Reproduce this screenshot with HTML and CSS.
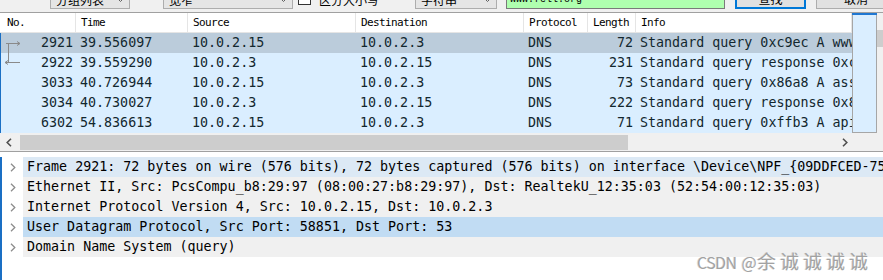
FILE: index.html
```html
<!DOCTYPE html>
<html>
<head>
<meta charset="utf-8">
<link rel="stylesheet" href="styles.css">
</head>
<body>
<div class="topbar">
  <div class="combo c1"><span>分组列表</span><svg class="dd" width="9" height="5" viewBox="0 0 9 5"><path d="M0.5 0.5L4.5 4.5L8.5 0.5" fill="none" stroke="#606060"/></svg></div>
  <div class="combo c2"><span>宽窄</span><svg class="dd" width="9" height="5" viewBox="0 0 9 5"><path d="M0.5 0.5L4.5 4.5L8.5 0.5" fill="none" stroke="#606060"/></svg></div>
  <div class="chk"><span class="box"></span><span class="lbl">区分大小写</span></div>
  <div class="combo c3"><span>字符串</span><svg class="dd" width="9" height="5" viewBox="0 0 9 5"><path d="M0.5 0.5L4.5 4.5L8.5 0.5" fill="none" stroke="#606060"/></svg></div>
  <div class="search">www.fell.org</div>
  <div class="btn primary">查找</div>
  <div class="btn b2">取消</div>
</div>

<div class="list">
  <div class="table">
    <div class="thead">
      <div class="th th-no">No.</div>
      <div class="th">Time</div>
      <div class="th">Source</div>
      <div class="th">Destination</div>
      <div class="th">Protocol</div>
      <div class="th">Length</div>
      <div class="th">Info</div>
    </div>
    <div class="rows">
      <div class="row sel">
        <div class="td no"><svg class="rel" width="24" height="20" viewBox="0 0 24 20"><path d="M6 10.5H20M17 8.5L20 10.5L17 12.5M8.5 10.5V20" fill="none" stroke="#8a8a8a"/></svg><span>2921</span></div>
        <div class="td">39.556097</div>
        <div class="td">10.0.2.15</div>
        <div class="td">10.0.2.3</div>
        <div class="td">DNS</div>
        <div class="td r">72</div>
        <div class="td">Standard query 0xc9ec A www.fell.org</div>
      </div>
      <div class="row">
        <div class="td no"><svg class="rel" width="24" height="20" viewBox="0 0 24 20"><path d="M8.5 0V9.5M5 9.5H20M8 7.5L5 9.5L8 11.5" fill="none" stroke="#8a8a8a"/></svg><span>2922</span></div>
        <div class="td">39.559290</div>
        <div class="td">10.0.2.3</div>
        <div class="td">10.0.2.15</div>
        <div class="td">DNS</div>
        <div class="td r">231</div>
        <div class="td">Standard query response 0xc9ec A www.fell.org CNAME</div>
      </div>
      <div class="row">
        <div class="td no"><span>3033</span></div>
        <div class="td">40.726944</div>
        <div class="td">10.0.2.15</div>
        <div class="td">10.0.2.3</div>
        <div class="td">DNS</div>
        <div class="td r">73</div>
        <div class="td">Standard query 0x86a8 A assets.fell.org</div>
      </div>
      <div class="row">
        <div class="td no"><span>3034</span></div>
        <div class="td">40.730027</div>
        <div class="td">10.0.2.3</div>
        <div class="td">10.0.2.15</div>
        <div class="td">DNS</div>
        <div class="td r">222</div>
        <div class="td">Standard query response 0x86a8 A assets.fell.org</div>
      </div>
      <div class="row">
        <div class="td no"><span>6302</span></div>
        <div class="td">54.836613</div>
        <div class="td">10.0.2.15</div>
        <div class="td">10.0.2.3</div>
        <div class="td">DNS</div>
        <div class="td r">71</div>
        <div class="td">Standard query 0xffb3 A api.fell.org</div>
      </div>
    </div>
  </div>
  <div class="minimap"><div class="mark"></div></div>
  <div class="vscroll"><div class="vthumb"></div></div>
</div>

<div class="hbar">
  <div class="harrow"><svg width="6" height="9" viewBox="0 0 6 9"><path d="M5 0.8L1.2 4.5L5 8.2" fill="none" stroke="#505050" stroke-width="1.6"/></svg></div>
  <div class="hthumb"></div>
  <div></div>
  <div class="harrow"><svg width="6" height="9" viewBox="0 0 6 9"><path d="M1 0.8L4.8 4.5L1 8.2" fill="none" stroke="#505050" stroke-width="1.6"/></svg></div>
  <div></div>
</div>

<div class="splitter"></div>

<div class="detail">
  <div class="drow hover"><div class="dicon"><svg width="6" height="9" viewBox="0 0 6 9"><path d="M1 0.8L4.8 4.5L1 8.2" fill="none" stroke="#8c8c8c" stroke-width="1.3"/></svg></div><div class="dtext">Frame 2921: 72 bytes on wire (576 bits), 72 bytes captured (576 bits) on interface \Device\NPF_{09DDFCED-7589}</div></div>
  <div class="drow"><div class="dicon"><svg width="6" height="9" viewBox="0 0 6 9"><path d="M1 0.8L4.8 4.5L1 8.2" fill="none" stroke="#8c8c8c" stroke-width="1.3"/></svg></div><div class="dtext">Ethernet II, Src: PcsCompu_b8:29:97 (08:00:27:b8:29:97), Dst: RealtekU_12:35:03 (52:54:00:12:35:03)</div></div>
  <div class="drow"><div class="dicon"><svg width="6" height="9" viewBox="0 0 6 9"><path d="M1 0.8L4.8 4.5L1 8.2" fill="none" stroke="#8c8c8c" stroke-width="1.3"/></svg></div><div class="dtext">Internet Protocol Version 4, Src: 10.0.2.15, Dst: 10.0.2.3</div></div>
  <div class="drow sel"><div class="dicon"><svg width="6" height="9" viewBox="0 0 6 9"><path d="M1 0.8L4.8 4.5L1 8.2" fill="none" stroke="#8c8c8c" stroke-width="1.3"/></svg></div><div class="dtext">User Datagram Protocol, Src Port: 58851, Dst Port: 53</div></div>
  <div class="drow"><div class="dicon"><svg width="6" height="9" viewBox="0 0 6 9"><path d="M1 0.8L4.8 4.5L1 8.2" fill="none" stroke="#8c8c8c" stroke-width="1.3"/></svg></div><div class="dtext">Domain Name System (query)</div></div>
</div>

<div class="wm"><span class="wm-lat">CSDN @</span><span class="wm-cjk">余诚诚诚诚</span></div>
</body>
</html>
```

FILE: styles.css
```css
* { box-sizing: border-box; }
html, body { margin: 0; padding: 0; }
body {
  width: 883px;
  height: 280px;
  overflow: hidden;
  background: #fff;
  position: relative;
  font-family: "DejaVu Sans Mono", monospace;
  color: #000;
}

/* top find bar (clipped) */
.topbar {
  display: flex;
  align-items: flex-end;
  height: 13px;
  border-bottom: 1px solid #a0a0a0;
  background: #f0f0f0;
  overflow: hidden;
  font-family: "Noto Sans CJK SC", sans-serif;
  font-size: 12px;
}
.combo {
  flex: none;
  height: 22px;
  margin-bottom: 3px;
  border: 1px solid #adadad;
  background: #e5e5e5;
  display: flex;
  align-items: center;
  justify-content: space-between;
  padding: 3px 4px 0 5px;
  line-height: 17px;
}
.c1 { margin-left: 50px; width: 80px; }
.c2 { margin-left: 33px; width: 130px; }
.c3 { margin-left: 36px; width: 82px; }
.chk {
  flex: none;
  display: flex;
  align-items: flex-end;
  height: 16px;
  margin-bottom: 7px;
  margin-left: 5px;
}
.chk .box {
  width: 13px;
  height: 13px;
  border: 1px solid #333;
  background: #fff;
}
.chk .lbl { margin-left: 8px; line-height: 14px; margin-bottom: -2px; }
.search {
  flex: none;
  margin-left: 9px;
  width: 219px;
  height: 22px;
  margin-bottom: 3px;
  border: 1px solid #7a7a7a;
  background: #afffaf;
  font-family: "Liberation Mono", monospace;
  font-size: 10px;
  line-height: 24px;
  padding-left: 3px;
}
.btn {
  flex: none;
  height: 22px;
  margin-bottom: 3px;
  border: 1px solid #adadad;
  background: #e1e1e1;
  text-align: center;
  line-height: 22px;
}
.btn.primary { margin-left: 10px; width: 71px; border: 2px solid #0078d7; line-height: 20px; }
.btn.b2 { margin-left: 10px; width: 80px; }

/* packet list */
.list { display: flex; height: 120px; }
.table { width: 852px; flex: none; overflow: hidden; }
.thead, .row {
  display: grid;
  grid-template-columns: 76px 112px 168px 168px 64px 48px 216px;
}
.thead {
  height: 20px;
  border-bottom: 1px solid #e5e5e5;
  background: #fff;
}
.th {
  border-right: 1px solid #e5e5e5;
  padding-left: 5px;
  font-size: 11px;
  letter-spacing: -0.62px;
  line-height: 19px;
  white-space: nowrap;
  overflow: hidden;
}
.th-no { padding-left: 7px; }
.rows { box-shadow: inset 1px 0 #1a6fc4; }
.row {
  height: 20px;
  line-height: 20px;
  font-size: 13.33px;
  color: #12272e;
  background: #daeeff;
  white-space: nowrap;
  box-shadow: inset 1px 0 #1a6fc4;
}
.row.sel { background: #bbccdb; }
.td { overflow: hidden; padding-left: 4px; }
.td.r { text-align: right; padding-right: 3px; padding-left: 0; }
.td.no { display: flex; align-items: center; padding-left: 0; padding-right: 3px; }
.td.no span { margin-left: auto; }
.rel { flex: none; display: block; }

.minimap {
  width: 25px;
  flex: none;
  border: 1px solid #a6a6a6;
  border-top: none;
  background: #daeeff;
}
.minimap .mark { height: 2px; margin: 0 -1px; background: #1f77d2; }
.vscroll { width: 6px; flex: none; background: #f0f0f0; }
.vthumb { margin-top: 17px; height: 17px; background: #cdcdcd; }

/* horizontal scrollbar */
.hbar {
  display: grid;
  grid-template-columns: 17px 611px 1fr 17px 30px;
  height: 18px;
  background: #f0f0f0;
}
.harrow { display: flex; align-items: center; justify-content: center; }
.hthumb { margin: 2px 0 1px 3px; background: #cdcdcd; }

.splitter { height: 6px; border-top: 1px solid #a0a0a0; background: #fff; }

/* detail tree */
.detail {
  height: 123px;
  box-shadow: inset 2px 0 #1a6fc4;
}
.drow { display: flex; height: 20px; }
.dicon {
  width: 23px;
  flex: none;
  display: flex;
  align-items: center;
  justify-content: center;
  padding-left: 2px;
}
.dtext {
  flex: 1;
  min-width: 0;
  background: #f0f0f0;
  padding-left: 4px;
  font-size: 13.33px;
  line-height: 20px;
  white-space: nowrap;
  overflow: hidden;
}
.drow.hover .dtext { background: #dce9f5; }
.drow.sel .dtext { background: #c1dcf3; }

/* watermark */
.wm {
  position: absolute;
  left: 697px;
  top: 250px;
  height: 22px;
  line-height: 22px;
  white-space: nowrap;
  font-family: "Noto Sans CJK SC", sans-serif;
  color: #a2a2a2;
  text-shadow: 1px 1px 0 rgba(255,255,255,0.9), -1px 0 0 rgba(120,120,120,0.25);
}
.wm-lat { font-size: 16px; letter-spacing: -0.6px; word-spacing: 2px; }
.wm-cjk { font-size: 19px; letter-spacing: 4px; margin-left: 1px; }
```
